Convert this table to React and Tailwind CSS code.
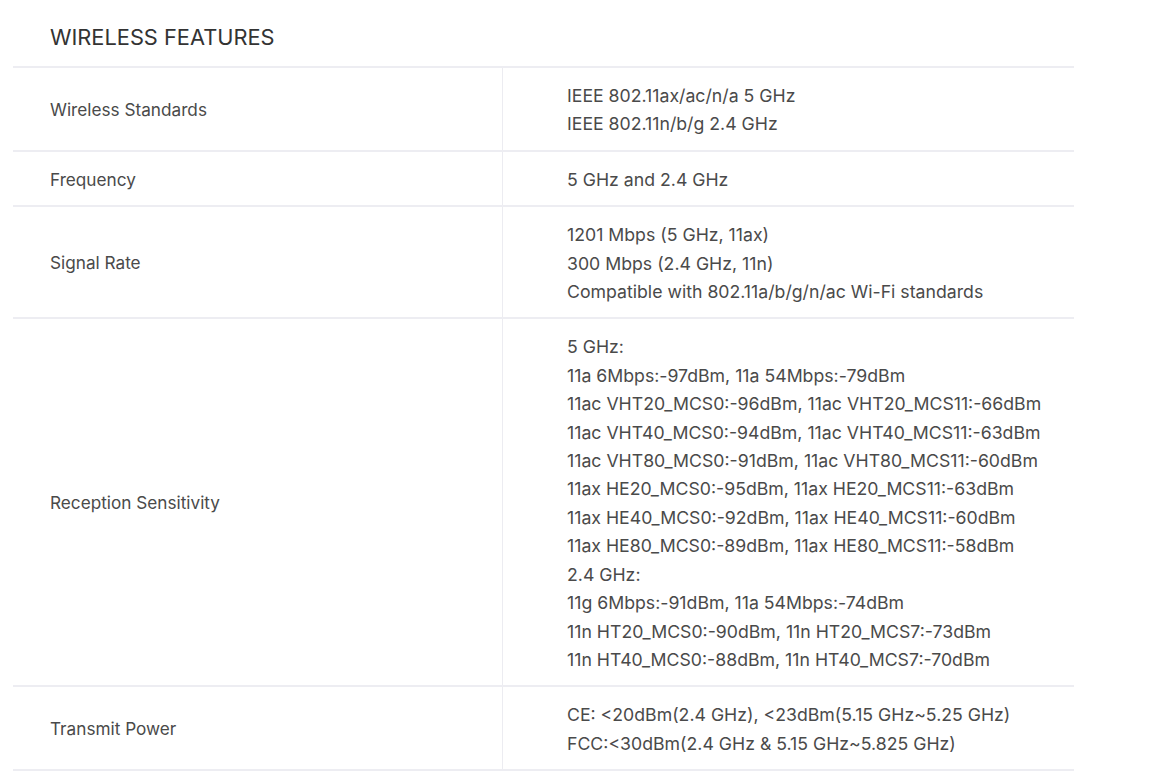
import React from 'react';

const rows = [
  {
    label: 'Wireless Standards',
    values: ['IEEE 802.11ax/ac/n/a 5 GHz', 'IEEE 802.11n/b/g 2.4 GHz'],
  },
  {
    label: 'Frequency',
    values: ['5 GHz and 2.4 GHz'],
  },
  {
    label: 'Signal Rate',
    values: ['1201 Mbps (5 GHz, 11ax)', '300 Mbps (2.4 GHz, 11n)', 'Compatible with 802.11a/b/g/n/ac Wi-Fi standards'],
  },
  {
    label: 'Reception Sensitivity',
    values: [
      '5 GHz:',
      '11a 6Mbps:-97dBm, 11a 54Mbps:-79dBm',
      '11ac VHT20_MCS0:-96dBm, 11ac VHT20_MCS11:-66dBm',
      '11ac VHT40_MCS0:-94dBm, 11ac VHT40_MCS11:-63dBm',
      '11ac VHT80_MCS0:-91dBm, 11ac VHT80_MCS11:-60dBm',
      '11ax HE20_MCS0:-95dBm, 11ax HE20_MCS11:-63dBm',
      '11ax HE40_MCS0:-92dBm, 11ax HE40_MCS11:-60dBm',
      '11ax HE80_MCS0:-89dBm, 11ax HE80_MCS11:-58dBm',
      '2.4 GHz:',
      '11g 6Mbps:-91dBm, 11a 54Mbps:-74dBm',
      '11n HT20_MCS0:-90dBm, 11n HT20_MCS7:-73dBm',
      '11n HT40_MCS0:-88dBm, 11n HT40_MCS7:-70dBm',
    ],
  },
  {
    label: 'Transmit Power',
    values: ['CE: <20dBm(2.4 GHz), <23dBm(5.15 GHz~5.25 GHz)', 'FCC:<30dBm(2.4 GHz & 5.15 GHz~5.825 GHz)'],
  },
];

export default function App() {
  return (
    <div className="min-h-screen bg-white font-['Inter',sans-serif] text-[#4a4a4a]">
      <div className="w-[1061px] ml-[13px]">
        <h2 className="h-[66px] flex items-center pt-[8px] pl-[37px] text-[21.8px] text-[#333]">
          WIRELESS FEATURES
        </h2>
        <div className="border-t-2 border-[#ededf2]">
          {rows.map((row) => (
            <div key={row.label} className="flex border-b-2 border-[#ededf2]">
              <div className="w-[489px] flex items-center pl-[37px] pt-[2px] text-[17.2px]">
                {row.label}
              </div>
              <div className="flex-1 border-l border-[#ececf1] pl-[64px] pt-[14px] pb-[11px] text-[17.7px] leading-[28.4px]">
                {row.values.map((v, i) => (
                  <div key={i}>{v}</div>
                ))}
              </div>
            </div>
          ))}
        </div>
      </div>
    </div>
  );
}
